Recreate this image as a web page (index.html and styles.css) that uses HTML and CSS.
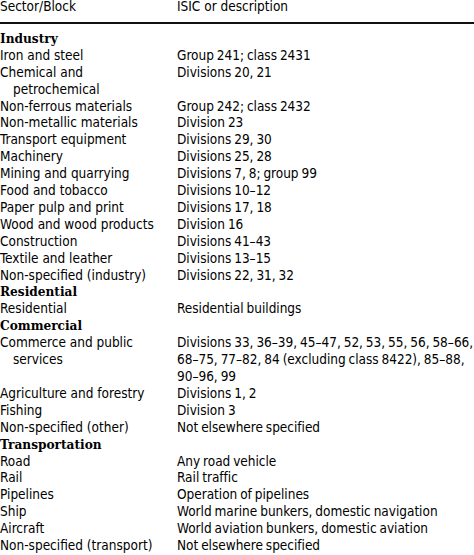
FILE: index.html
```html
<!DOCTYPE html>
<html>
<head>
<meta charset="utf-8">
<link rel="stylesheet" href="styles.css">
</head>
<body>
<table class="tbl">
  <thead>
    <tr><th class="c1">Sector/Block</th><th class="c2">ISIC or description</th></tr>
  </thead>
  <tbody>
    <tr class="first"><td class="grp" colspan="2">Industry</td></tr>
    <tr><td class="c1">Iron and steel</td><td class="c2">Group 241; class 2431</td></tr>
    <tr><td class="c1">Chemical and<br><span class="ind">petrochemical</span></td><td class="c2">Divisions 20, 21</td></tr>
    <tr><td class="c1">Non-ferrous materials</td><td class="c2">Group 242; class 2432</td></tr>
    <tr><td class="c1">Non-metallic materials</td><td class="c2">Division 23</td></tr>
    <tr><td class="c1">Transport equipment</td><td class="c2">Divisions 29, 30</td></tr>
    <tr><td class="c1">Machinery</td><td class="c2">Divisions 25, 28</td></tr>
    <tr><td class="c1">Mining and quarrying</td><td class="c2">Divisions 7, 8; group 99</td></tr>
    <tr><td class="c1">Food and tobacco</td><td class="c2">Divisions 10–12</td></tr>
    <tr><td class="c1">Paper pulp and print</td><td class="c2">Divisions 17, 18</td></tr>
    <tr><td class="c1">Wood and wood products</td><td class="c2">Division 16</td></tr>
    <tr><td class="c1">Construction</td><td class="c2">Divisions 41–43</td></tr>
    <tr><td class="c1">Textile and leather</td><td class="c2">Divisions 13–15</td></tr>
    <tr><td class="c1">Non-specified (industry)</td><td class="c2">Divisions 22, 31, 32</td></tr>
    <tr><td class="grp" colspan="2">Residential</td></tr>
    <tr><td class="c1">Residential</td><td class="c2">Residential buildings</td></tr>
    <tr><td class="grp" colspan="2">Commercial</td></tr>
    <tr><td class="c1">Commerce and public<br><span class="ind">services</span></td><td class="c2">Divisions 33, 36–39, 45–47, 52, 53, 55, 56, 58–66,<br>68–75, 77–82, 84 (excluding class 8422), 85–88,<br>90–96, 99</td></tr>
    <tr><td class="c1">Agriculture and forestry</td><td class="c2">Divisions 1, 2</td></tr>
    <tr><td class="c1">Fishing</td><td class="c2">Division 3</td></tr>
    <tr><td class="c1">Non-specified (other)</td><td class="c2">Not elsewhere specified</td></tr>
    <tr><td class="grp" colspan="2">Transportation</td></tr>
    <tr><td class="c1">Road</td><td class="c2">Any road vehicle</td></tr>
    <tr><td class="c1">Rail</td><td class="c2">Rail traffic</td></tr>
    <tr><td class="c1">Pipelines</td><td class="c2">Operation of pipelines</td></tr>
    <tr><td class="c1">Ship</td><td class="c2">World marine bunkers, domestic navigation</td></tr>
    <tr><td class="c1">Aircraft</td><td class="c2">World aviation bunkers, domestic aviation</td></tr>
    <tr><td class="c1">Non-specified (transport)</td><td class="c2">Not elsewhere specified</td></tr>
  </tbody>
</table>
</body>
</html>
```
FILE: styles.css
```css
html, body {
  margin: 0;
  padding: 0;
  background: #fff;
}
body {
  font-family: "DejaVu Sans Condensed", "DejaVu Sans", sans-serif;
  font-stretch: condensed;
  font-size: 13.5px;
  line-height: 16.9px;
  color: #000;
  overflow: hidden;
}
.tbl {
  border-collapse: collapse;
  width: 474px;
  table-layout: fixed;
}
.tbl th, .tbl td {
  padding: 0;
  text-align: left;
  vertical-align: top;
  white-space: nowrap;
}
.tbl th {
  font-weight: normal;
  line-height: 13px;
  padding-bottom: 8.5px;
  border-bottom: 2px solid #111;
}
.c1 {
  width: 177px;
}
td.c2 {
  word-spacing: -0.9px;
  letter-spacing: -0.02px;
}
.tbl .first td {
  padding-top: 6.4px;
}
.grp {
  font-family: "DejaVu Serif Condensed", "DejaVu Serif", serif;
  font-weight: bold;
  font-size: 13.5px;
}
.ind {
  padding-left: 13px;
}
```
